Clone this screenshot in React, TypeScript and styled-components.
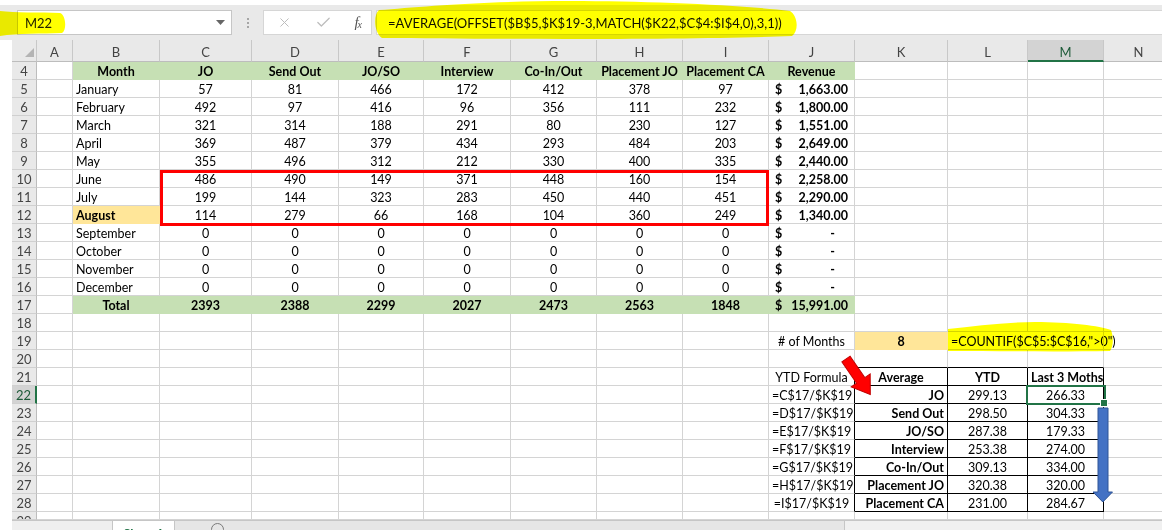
import React from "react";
import styled, { createGlobalStyle } from "styled-components";
import { X, Check } from "lucide-react";

const GRID = "#d4d4d4";
const GREEN = "#c6e0b4";
const YELLOW = "#ffe699";
const BLACK = "#000000";
const HEAD_BG = "#e9e9e9";
const SEL_GREEN = "#217346";

const GlobalStyle = createGlobalStyle`
  html, body { margin: 0; padding: 0; background: #ffffff; }
  body { font-family: Lato, "Liberation Sans", sans-serif; }
`;

const Root = styled.div`
  position: relative;
  width: 1162px;
  height: 530px;
  overflow: hidden;
  display: flex;
  flex-direction: column;
  background: #ffffff;
`;

const TopStrip = styled.div`
  height: 5px;
  flex: none;
  background: #ffffff;
`;

const FormulaBar = styled.div`
  height: 35px;
  flex: none;
  background: ${HEAD_BG};
  display: flex;
  align-items: flex-start;
  padding: 5px 0 0 17px;
  box-sizing: border-box;
`;

const NameBox = styled.div`
  width: 215px;
  height: 25px;
  box-sizing: border-box;
  background: #ffffff;
  border: 1px solid #c6c6c6;
  display: flex;
  align-items: center;
  justify-content: space-between;
  padding: 0 6px 0 7px;
  font-size: 13px;
  color: #222;
`;

const DotStack = styled.div`
  width: 31px;
  height: 25px;
  display: flex;
  flex-direction: column;
  align-items: center;
  justify-content: center;
  gap: 2px;
`;

const Dot = styled.span`
  width: 2px;
  height: 2px;
  background: #a6a6a6;
`;

const ButtonBox = styled.div`
  width: 109px;
  height: 25px;
  box-sizing: border-box;
  background: #ffffff;
  border: 1px solid #d6d6d6;
  display: flex;
  align-items: center;
  justify-content: space-between;
  padding: 0 10px 0 13px;
  margin-right: 4px;
`;

const Fx = styled.span`
  font-family: "Liberation Serif", serif;
  font-style: italic;
  font-size: 15px;
  color: #555;
  letter-spacing: -1px;
  & sub {
    font-size: 10px;
    vertical-align: -1px;
  }
`;

const FormulaInput = styled.div`
  flex: 1;
  height: 25px;
  box-sizing: border-box;
  background: #ffffff;
  border: 1px solid #d6d6d6;
  border-right: none;
  display: flex;
  align-items: center;
  padding-left: 11px;
  font-size: 13px;
  color: #111;
  white-space: nowrap;
`;

const SheetWrap = styled.div`
  position: relative;
  margin-left: 12px;
  flex: none;
`;

const COL_KEYS = ["A", "B", "C", "D", "E", "F", "G", "H", "I", "J", "K", "L", "M", "N"];
const WIDTHS = [36, 87, 92, 87, 85, 87, 86, 86, 86, 86, 93, 80, 76, 70];

const Grid = styled.div`
  display: grid;
  grid-template-columns: 25px ${WIDTHS.map((w) => `${w}px`).join(" ")};
  grid-template-rows: 22px repeat(25, 18px) 8px;
`;

const Corner = styled.div`
  background: ${HEAD_BG};
  border-right: 1px solid #c8c8c8;
  border-bottom: 1px solid #bdbdbd;
  box-sizing: border-box;
  display: flex;
  align-items: flex-end;
  justify-content: flex-end;
  padding: 0 2px 4px 0;
`;

const ColHead = styled.div<{ $sel?: boolean }>`
  box-sizing: border-box;
  background: ${(p) => (p.$sel ? "#d3d3d3" : HEAD_BG)};
  border-right: 1px solid #c8c8c8;
  border-bottom: ${(p) => (p.$sel ? `2px solid ${SEL_GREEN}` : "1px solid #bdbdbd")};
  display: flex;
  align-items: center;
  justify-content: center;
  font-size: 13px;
  color: ${(p) => (p.$sel ? "#1d5a38" : "#444")};
  padding-top: ${(p) => (p.$sel ? "3px" : "2px")};
`;

const RowHead = styled.div<{ $sel?: boolean }>`
  box-sizing: border-box;
  background: ${(p) => (p.$sel ? "#d3d3d3" : HEAD_BG)};
  border-right: ${(p) => (p.$sel ? `2px solid ${SEL_GREEN}` : "1px solid #bdbdbd")};
  border-bottom: 1px solid #d0d0d0;
  font-size: 13px;
  line-height: 17px;
  padding-top: 1px;
  text-align: center;
  color: ${(p) => (p.$sel ? "#1d5a38" : "#444")};
  overflow: hidden;
`;

const Cell = styled.div<{
  $align?: "left" | "center" | "right";
  $bold?: boolean;
  $bg?: string;
  $br?: string;
  $bb?: string;
  $over?: boolean;
}>`
  box-sizing: border-box;
  position: relative;
  border-right: 1px solid ${(p) => p.$br ?? GRID};
  border-bottom: 1px solid ${(p) => p.$bb ?? GRID};
  background: ${(p) => p.$bg ?? "transparent"};
  font-size: 12.5px;
  line-height: 17px;
  padding: 1px 3px 0 3px;
  font-weight: ${(p) => (p.$bold ? 700 : 400)};
  text-align: ${(p) => p.$align ?? "left"};
  white-space: nowrap;
  overflow: ${(p) => (p.$over ? "visible" : "hidden")};
  color: #000;
`;

const MoneyCell = styled(Cell)`
  display: flex;
  justify-content: space-between;
  padding: 1px 6px 0 6px;
  font-weight: 700;
`;

const Amount = styled.span<{ $dash?: boolean }>`
  margin-right: ${(p) => (p.$dash ? "13px" : "0")};
`;

const RedBox = styled.div`
  position: absolute;
  left: 148px;
  top: 130px;
  width: 609px;
  height: 56px;
  box-sizing: border-box;
  border: 3px solid #ff0000;
  pointer-events: none;
`;

const Selection = styled.div`
  position: absolute;
  left: 1014px;
  top: 345px;
  width: 80px;
  height: 20px;
  box-sizing: border-box;
  border: 2px solid ${SEL_GREEN};
  pointer-events: none;
`;

const FillHandle = styled.div`
  position: absolute;
  right: -4px;
  bottom: -4px;
  width: 6px;
  height: 6px;
  background: ${SEL_GREEN};
  border: 1px solid #ffffff;
`;

const BottomBar = styled.div`
  flex: none;
  height: 30px;
  margin-left: 12px;
  display: flex;
  background: #e6e6e6;
  border-top: 1px solid #c6c6c6;
`;

const NavBox = styled.div`
  width: 100px;
  background: #efefef;
  border-right: 1px solid #c6c6c6;
`;

const SheetTab = styled.div`
  width: 62px;
  background: #ffffff;
  font-size: 13px;
  font-weight: 700;
  color: ${SEL_GREEN};
  text-align: center;
  padding-top: 5px;
  box-sizing: border-box;
  border-right: 1px solid #c6c6c6;
`;

const AddArea = styled.div`
  width: 669px;
  padding: 2px 0 0 36px;
  box-sizing: border-box;
`;

const AddCircle = styled.div`
  width: 13px;
  height: 13px;
  border-radius: 50%;
  border: 1px solid #7a7a7a;
  box-sizing: border-box;
`;

const ScrollArea = styled.div`
  flex: 1;
  background: #f0f0f0;
  border-left: 1px solid #c6c6c6;
`;

const Mark = styled.svg`
  position: absolute;
  pointer-events: none;
  mix-blend-mode: multiply;
`;

const ArrowSvg = styled.svg`
  position: absolute;
  pointer-events: none;
  overflow: visible;
`;

type Spec = {
  t?: string;
  a?: "left" | "center" | "right";
  b?: boolean;
  bg?: string;
  br?: string;
  bb?: string;
  over?: boolean;
  money?: [string, string];
};

type RowDef = { n: number; sel?: boolean; cells: Record<string, Spec> };

const months: [string, number[], string][] = [
  ["January", [57, 81, 466, 172, 412, 378, 97], "1,663.00"],
  ["February", [492, 97, 416, 96, 356, 111, 232], "1,800.00"],
  ["March", [321, 314, 188, 291, 80, 230, 127], "1,551.00"],
  ["April", [369, 487, 379, 434, 293, 484, 203], "2,649.00"],
  ["May", [355, 496, 312, 212, 330, 400, 335], "2,440.00"],
  ["June", [486, 490, 149, 371, 448, 160, 154], "2,258.00"],
  ["July", [199, 144, 323, 283, 450, 440, 451], "2,290.00"],
  ["August", [114, 279, 66, 168, 104, 360, 249], "1,340.00"],
  ["September", [0, 0, 0, 0, 0, 0, 0], "-"],
  ["October", [0, 0, 0, 0, 0, 0, 0], "-"],
  ["November", [0, 0, 0, 0, 0, 0, 0], "-"],
  ["December", [0, 0, 0, 0, 0, 0, 0], "-"],
];

const headers = ["Month", "JO", "Send Out", "JO/SO", "Interview", "Co-In/Out", "Placement JO", "Placement CA", "Revenue"];
const dataCols = ["C", "D", "E", "F", "G", "H", "I"];

const summary: [string, string, string, string][] = [
  ["=C$17/$K$19", "JO", "299.13", "266.33"],
  ["=D$17/$K$19", "Send Out", "298.50", "304.33"],
  ["=E$17/$K$19", "JO/SO", "287.38", "179.33"],
  ["=F$17/$K$19", "Interview", "253.38", "274.00"],
  ["=G$17/$K$19", "Co-In/Out", "309.13", "334.00"],
  ["=H$17/$K$19", "Placement JO", "320.38", "320.00"],
  ["=I$17/$K$19", "Placement CA", "231.00", "284.67"],
];

function buildRows(): RowDef[] {
  const rows: RowDef[] = [];
  const r4: Record<string, Spec> = {};
  ["B", "C", "D", "E", "F", "G", "H", "I", "J"].forEach((c, i) => {
    r4[c] = { t: headers[i], a: "center", b: true, bg: GREEN, br: GREEN, bb: GREEN };
  });
  rows.push({ n: 4, cells: r4 });
  months.forEach(([m, vals, rev], i) => {
    const cells: Record<string, Spec> = {};
    const isAug = m === "August";
    cells.B = isAug ? { t: m, b: true, bg: YELLOW, br: YELLOW, bb: YELLOW } : { t: m };
    dataCols.forEach((c, j) => {
      cells[c] = { t: String(vals[j]), a: "center" };
    });
    cells.J = { money: ["$", rev] };
    rows.push({ n: 5 + i, cells });
  });
  const totals = [2393, 2388, 2299, 2027, 2473, 2563, 1848];
  const r17: Record<string, Spec> = {
    B: { t: "Total", a: "center", b: true, bg: GREEN, br: GREEN, bb: GREEN },
    J: { money: ["$", "15,991.00"], bg: GREEN, br: GREEN, bb: GREEN },
  };
  dataCols.forEach((c, j) => {
    r17[c] = { t: String(totals[j]), a: "center", b: true, bg: GREEN, br: GREEN, bb: GREEN };
  });
  rows.push({ n: 17, cells: r17 });
  rows.push({ n: 18, cells: {} });
  rows.push({
    n: 19,
    cells: {
      J: { t: "# of Months", a: "center" },
      K: { t: "8", a: "center", b: true, bg: YELLOW, br: YELLOW, bb: YELLOW },
      L: { t: '=COUNTIF($C$5:$C$16,">0")', over: true, br: "transparent" },
    },
  });
  rows.push({ n: 20, cells: { K: { bb: BLACK }, L: { bb: BLACK }, M: { bb: BLACK } } });
  rows.push({
    n: 21,
    cells: {
      J: { t: "YTD Formula", a: "center", br: BLACK },
      K: { t: "Average", a: "center", b: true, br: BLACK, bb: BLACK },
      L: { t: "YTD", a: "center", b: true, br: BLACK, bb: BLACK },
      M: { t: "Last 3 Moths", a: "center", b: true, br: BLACK, bb: BLACK },
    },
  });
  summary.forEach(([f, label, ytd, last], i) => {
    rows.push({
      n: 22 + i,
      sel: i === 0,
      cells: {
        J: { t: f, a: "center", br: BLACK },
        K: { t: label, a: "right", b: true, br: BLACK, bb: BLACK },
        L: { t: ytd, a: "center", br: BLACK, bb: BLACK },
        M: { t: last, a: "center", br: BLACK, bb: BLACK },
      },
    });
  });
  rows.push({ n: 29, cells: {} });
  return rows;
}

const ROWS = buildRows();

function renderCell(row: number, col: string, s: Spec | undefined) {
  const key = `${col}${row}`;
  if (s?.money) {
    const [sym, amt] = s.money;
    return (
      <MoneyCell key={key} $bg={s.bg} $br={s.br} $bb={s.bb}>
        <span>{sym}</span>
        <Amount $dash={amt === "-"}>{amt}</Amount>
      </MoneyCell>
    );
  }
  return (
    <Cell key={key} $align={s?.a} $bold={s?.b} $bg={s?.bg} $br={s?.br} $bb={s?.bb} $over={s?.over}>
      {s?.t ?? ""}
    </Cell>
  );
}

export default function App() {
  return (
    <Root>
      <GlobalStyle />
      <TopStrip />
      <FormulaBar>
        <NameBox>
          <span>M22</span>
          <svg width="9" height="5" viewBox="0 0 9 5">
            <polygon points="0,0 9,0 4.5,5" fill="#666" />
          </svg>
        </NameBox>
        <DotStack>
          <Dot />
          <Dot />
          <Dot />
        </DotStack>
        <ButtonBox>
          <X size={15} color="#bdbdbd" strokeWidth={1.6} />
          <Check size={17} color="#bdbdbd" strokeWidth={1.8} />
          <Fx>
            f<sub>x</sub>
          </Fx>
        </ButtonBox>
        <FormulaInput>=AVERAGE(OFFSET($B$5,$K$19-3,MATCH($K22,$C$4:$I$4,0),3,1))</FormulaInput>
      </FormulaBar>
      <SheetWrap>
        <Grid>
          <Corner>
            <svg width="9" height="9" viewBox="0 0 9 9">
              <polygon points="9,0 9,9 0,9" fill="#b4b4b4" />
            </svg>
          </Corner>
          {COL_KEYS.map((c) => (
            <ColHead key={c} $sel={c === "M"}>
              {c}
            </ColHead>
          ))}
          {ROWS.map((r) => (
            <React.Fragment key={r.n}>
              <RowHead $sel={r.sel}>{r.n}</RowHead>
              {COL_KEYS.map((c) => renderCell(r.n, c, r.cells[c]))}
            </React.Fragment>
          ))}
        </Grid>
        <RedBox />
        <Selection>
          <FillHandle />
        </Selection>
      </SheetWrap>
      <BottomBar>
        <NavBox />
        <SheetTab>Sheet1</SheetTab>
        <AddArea>
          <AddCircle />
        </AddArea>
        <ScrollArea />
      </BottomBar>

      {/* highlighter marks */}
      <Mark style={{ left: 0, top: 8 }} width="70" height="30" viewBox="0 0 70 30">
        <path d="M0 3 C 14 5, 40 4, 60 5 C 66 7, 67 22, 62 25 C 42 26, 18 25, 0 28 Z" fill="#ffff00" />
      </Mark>
      <Mark style={{ left: 370, top: 0 }} width="432" height="42" viewBox="0 0 432 42">
        <path
          d="M9 10 C 50 7, 110 1, 200 1 C 280 1, 370 5, 420 11 C 428 16, 429 31, 422 36 C 320 40, 120 39, 12 38 C 4 33, 3 15, 9 10 Z"
          fill="#ffff00"
        />
      </Mark>
      <Mark style={{ left: 945, top: 318 }} width="172" height="36" viewBox="0 0 172 36">
        <path d="M3 11 C 30 8, 60 4, 90 4 C 125 4, 155 8, 166 12 C 169 20, 168 29, 165 33 C 110 34, 50 33, 3 33 Z" fill="#ffff00" />
      </Mark>

      {/* red arrow */}
      <ArrowSvg style={{ left: 835, top: 350 }} width="50" height="52" viewBox="0 0 50 52">
        <g transform="translate(11 9) rotate(55.6)">
          <polygon points="0,-5 26,-5 26,-11.5 43,0 26,11.5 26,5 0,5" fill="#ff0000" stroke="#c00000" strokeWidth="1" />
        </g>
      </ArrowSvg>

      {/* blue arrow */}
      <ArrowSvg style={{ left: 1090, top: 405 }} width="26" height="100" viewBox="0 0 26 100">
        <polygon points="8,3 18,3 18,87 22.5,87 12.8,97 3,87 8,87" fill="#4472c4" stroke="#2f5597" strokeWidth="1" />
      </ArrowSvg>
    </Root>
  );
}
